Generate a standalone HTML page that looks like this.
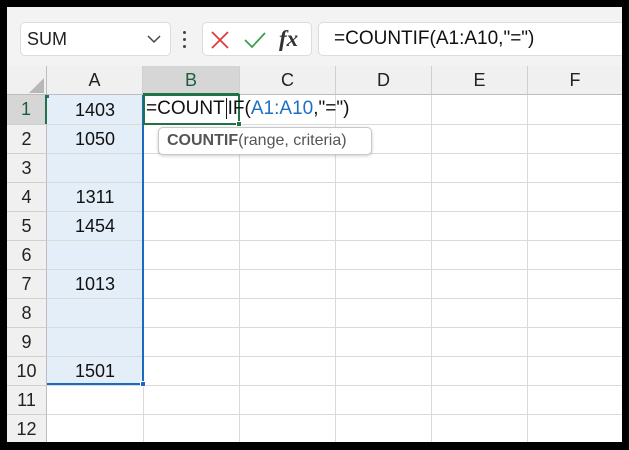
<!DOCTYPE html>
<html><head><meta charset="utf-8"><style>
*{margin:0;padding:0;box-sizing:border-box}
body{width:629px;height:450px;background:#000;position:relative;overflow:hidden;font-family:"Liberation Sans",sans-serif}
#app{position:absolute;left:7px;top:7px;width:615px;height:435px;background:#fff;overflow:hidden}
.tb{position:absolute;left:0;top:0;width:615px;height:59px;background:#f3f3f3}
.box{position:absolute;background:#fff;border:1px solid #dcdcdc;border-radius:5px}
.a{position:absolute}
.ch{position:absolute;top:59px;height:29px;background:#f0f0f0;border-bottom:1px solid #bdbdbd;text-align:center;font-size:18px;line-height:29px;color:#222}
.rh{position:absolute;left:0;width:40px;background:#f0f0f0;border-right:1px solid #bdbdbd;text-align:center;font-size:18px;color:#222}
.vl{position:absolute;top:88px;width:1px;height:347px;background:#dadada}
.hl{position:absolute;left:40px;height:1px;width:575px;background:#dadada}
.num{position:absolute;left:40px;width:96px;text-align:center;font-size:18px;color:#111}
</style></head><body><div id="app">
<div class="tb"></div>
<div class="box" style="left:13px;top:15px;width:151px;height:34px"></div>
<div class="a" style="left:20px;top:22px;font-size:18px;color:#222">SUM</div>
<svg class="a" style="left:140px;top:27px" width="14" height="10"><path d="M1 2 L7 8 L13 2" stroke="#444" stroke-width="1.5" fill="none"/></svg>
<div class="a" style="left:176px;top:24px;width:3px;height:3px;background:#444;border-radius:50%"></div>
<div class="a" style="left:176px;top:31px;width:3px;height:3px;background:#444;border-radius:50%"></div>
<div class="a" style="left:176px;top:38px;width:3px;height:3px;background:#444;border-radius:50%"></div>
<div class="box" style="left:195px;top:15px;width:110px;height:34px"></div>
<svg class="a" style="left:203px;top:23px" width="20" height="20"><path d="M2 2 L18 18 M18 2 L2 18" stroke="#e03a3a" stroke-width="1.8"/></svg>
<svg class="a" style="left:236px;top:24px" width="24" height="18"><path d="M2 9 L9 16 L22 2" stroke="#3aa04a" stroke-width="1.8" fill="none"/></svg>
<div class="a" style="left:272px;top:19px;font-family:'Liberation Serif',serif;font-style:italic;font-weight:bold;font-size:23px;color:#333">fx</div>
<div class="box" style="left:311px;top:15px;width:310px;height:34px;border-radius:5px 0 0 5px"></div>
<div class="a" style="left:327px;top:21px;font-size:19px;color:#111">=COUNTIF(A1:A10,"=")</div>

<div class="ch" style="left:0;width:40px;border-right:1px solid #bdbdbd"></div>
<svg class="a" style="left:22px;top:71px" width="16" height="16"><path d="M15 0 L15 15 L0 15Z" fill="#b8b8b8"/></svg>
<div class="ch" style="left:40px;width:96px;border-right:1px solid #cfcfcf">A</div>
<div class="ch" style="left:136px;width:96px;background:#d6d6d6;border-bottom:2px solid #217346;color:#1d5f3a">B</div>
<div class="ch" style="left:232px;width:96px;border-left:1px solid #cfcfcf">C</div>
<div class="ch" style="left:328px;width:96px;border-left:1px solid #cfcfcf">D</div>
<div class="ch" style="left:424px;width:96px;border-left:1px solid #cfcfcf">E</div>
<div class="ch" style="left:520px;width:95px;border-left:1px solid #cfcfcf">F</div>

<div class="a" style="left:40px;top:88px;width:96px;height:290px;background:#e4eef8"></div>
<div class="vl" style="left:136px"></div><div class="vl" style="left:232px"></div><div class="vl" style="left:328px"></div><div class="vl" style="left:424px"></div><div class="vl" style="left:520px"></div>
<div class="hl" style="top:117px"></div><div class="hl" style="top:146px"></div><div class="hl" style="top:175px"></div><div class="hl" style="top:204px"></div><div class="hl" style="top:233px"></div><div class="hl" style="top:262px"></div><div class="hl" style="top:291px"></div><div class="hl" style="top:320px"></div><div class="hl" style="top:349px"></div><div class="hl" style="top:378px"></div><div class="hl" style="top:407px"></div>

<div class="rh" style="top:88px;height:29px;line-height:29px;background:#d6d6d6;border-right:2px solid #217346;color:#1d5f3a">1</div>
<div class="rh" style="top:117px;height:29px;line-height:29px;border-top:1px solid #d0d0d0">2</div>
<div class="rh" style="top:146px;height:29px;line-height:29px;border-top:1px solid #d0d0d0">3</div>
<div class="rh" style="top:175px;height:29px;line-height:29px;border-top:1px solid #d0d0d0">4</div>
<div class="rh" style="top:204px;height:29px;line-height:29px;border-top:1px solid #d0d0d0">5</div>
<div class="rh" style="top:233px;height:29px;line-height:29px;border-top:1px solid #d0d0d0">6</div>
<div class="rh" style="top:262px;height:29px;line-height:29px;border-top:1px solid #d0d0d0">7</div>
<div class="rh" style="top:291px;height:29px;line-height:29px;border-top:1px solid #d0d0d0">8</div>
<div class="rh" style="top:320px;height:29px;line-height:29px;border-top:1px solid #d0d0d0">9</div>
<div class="rh" style="top:349px;height:29px;line-height:29px;border-top:1px solid #d0d0d0">10</div>
<div class="rh" style="top:378px;height:29px;line-height:29px;border-top:1px solid #d0d0d0">11</div>
<div class="rh" style="top:407px;height:28px;line-height:28px;border-top:1px solid #d0d0d0">12</div>

<div class="num" style="top:93px">1403</div>
<div class="num" style="top:122px">1050</div>
<div class="num" style="top:180px">1311</div>
<div class="num" style="top:209px">1454</div>
<div class="num" style="top:267px">1013</div>
<div class="num" style="top:354px">1501</div>

<div class="a" style="left:135px;top:88px;width:2px;height:290px;background:#1a6bbf"></div>
<div class="a" style="left:40px;top:376px;width:96px;height:2px;background:#1a6bbf"></div>
<div class="a" style="left:133px;top:374px;width:6px;height:6px;background:#1a6bbf;border:1px solid #fff"></div>
<div class="a" style="left:40px;top:88px;width:2px;height:3px;background:#1a6bbf"></div>

<div class="a" style="left:136px;top:87px;width:97px;height:31px;border:2px solid #217346;background:#fff"></div>
<div class="a" style="left:229px;top:114px;width:6px;height:6px;background:#217346;border:1px solid #fff"></div>
<div class="a" style="left:139px;top:91px;font-size:19px;color:#111;white-space:nowrap">=COUNT<span style="border-left:1px solid #111;margin-left:1px;padding-left:1px">IF(</span><span style="color:#1f6fc5">A1:A10</span>,"=")</div>

<div class="a" style="left:151px;top:120px;width:214px;height:28px;background:#fff;border:1px solid #c8c8c8;border-radius:5px;box-shadow:0 1px 3px rgba(0,0,0,.2);font-size:16px;line-height:26px;padding-left:8px;color:#555;white-space:nowrap"><b style="color:#555">COUNTIF</b>(range, criteria)</div>
</div></body></html>
